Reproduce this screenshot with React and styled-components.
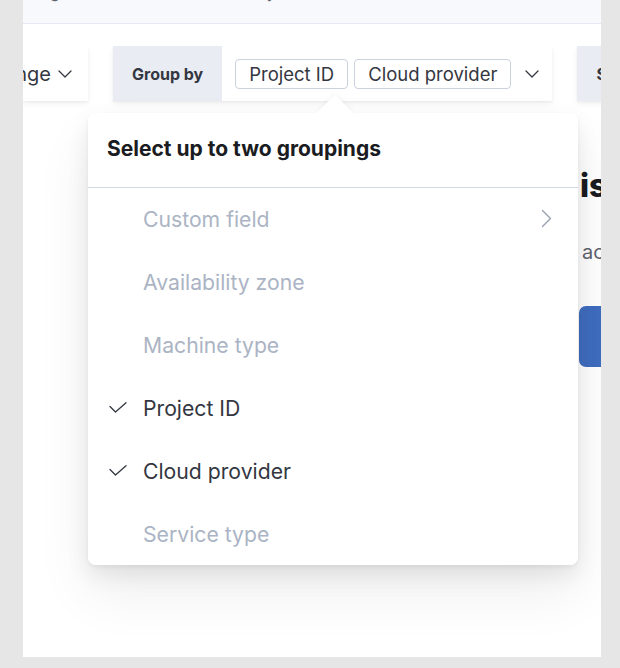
import React from "react"
import styled, { createGlobalStyle } from "styled-components"

const GlobalStyle = createGlobalStyle`
  html, body {
    margin: 0;
    padding: 0;
    background: #e6e6e6;
    font-family: Inter, "Noto Sans", "Liberation Sans", sans-serif;
    color: #343741;
  }
`

const Panel = styled.main`
  position: relative;
  margin-left: 23px;
  width: 578px;
  height: 657px;
  background: #fff;
  overflow: hidden;
`

const TopStrip = styled.div`
  height: 23px;
  background: #f8f9fc;
  border-bottom: 1px solid #e3e8f2;
  overflow: hidden;
  padding-left: 9px;
  p {
    margin: -18px 0 0;
    font-size: 16px;
    line-height: 20px;
    color: #5e646f;
    white-space: nowrap;
  }
`

const Toolbar = styled.div`
  display: flex;
  gap: 25px;
  margin-top: 22px;
  height: 55px;
`

const Card = styled.div`
  display: flex;
  align-items: stretch;
  flex-shrink: 0;
  background: #fff;
  box-shadow: 0 3px 6px rgba(0, 0, 0, 0.06), 0 1px 2px rgba(0, 0, 0, 0.04);
  width: ${(p) => (p.$width ? `${p.$width}px` : "auto")};
  overflow: hidden;
  justify-content: ${(p) => (p.$end ? "flex-end" : "flex-start")};
`

const Field = styled.div`
  display: flex;
  align-items: center;
  gap: 7px;
  padding-right: 16px;
  font-size: 20px;
  white-space: nowrap;
  flex-shrink: 0;
`

const Label = styled.div`
  display: flex;
  align-items: center;
  background: #e9edf3;
  padding: 0 19px;
  font-size: 16px;
  font-weight: 700;
  color: #343741;
  white-space: nowrap;
  flex-shrink: 0;
`

const Chips = styled.div`
  display: flex;
  align-items: center;
  gap: 6px;
  padding: 0 13px 0 13px;
`

const Chip = styled.span`
  display: inline-flex;
  align-items: center;
  height: 30px;
  box-sizing: border-box;
  padding: 0 13px;
  border: 1px solid #cbd2de;
  border-radius: 4px;
  font-size: 18.5px;
  color: #343741;
  white-space: nowrap;
`

const ChevronBtn = styled.span`
  display: inline-flex;
  margin-left: 8px;
`

const Hero = styled.section`
  padding: 65px 0 0 557px;
  white-space: nowrap;
  h1 {
    margin: 0;
    font-size: 32px;
    line-height: 40px;
    font-weight: 800;
    color: #1a1c21;
  }
  p {
    margin: 32px 0 0 2px;
    font-size: 20px;
    line-height: 28px;
    color: #5e646f;
  }
`

const PrimaryButton = styled.button`
  display: block;
  margin: 40px 0 0 -1px;
  width: 200px;
  height: 61px;
  border: 0;
  border-radius: 7px;
  background: #3f6dbf;
  color: #fff;
  font: inherit;
`

const Popover = styled.div`
  position: absolute;
  left: 65px;
  top: 113px;
  width: 490px;
  height: 452px;
  background: #fff;
  border-radius: 8px;
  box-shadow: 0 2px 4px rgba(0, 0, 0, 0.05), 0 10px 22px rgba(0, 0, 0, 0.08),
    0 28px 56px rgba(0, 0, 0, 0.07);
  z-index: 5;
`

const Arrow = styled.div`
  position: absolute;
  left: 234px;
  top: -13px;
  width: 26px;
  height: 26px;
  background: #fff;
  transform: rotate(45deg);
  box-shadow: -2px -2px 4px rgba(0, 0, 0, 0.03);
`

const PopoverBody = styled.div`
  position: relative;
  height: 100%;
  border-radius: 8px;
  overflow: hidden;
  background: #fff;
`

const PopoverTitle = styled.h2`
  margin: 0;
  box-sizing: border-box;
  height: 75px;
  padding: 22px 19px 0;
  font-size: 21px;
  line-height: 28px;
  font-weight: 700;
  color: #1a1c21;
  border-bottom: 1px solid #d3dae6;
`

const OptionList = styled.ul`
  list-style: none;
  margin: -1px 0 0;
  padding: 0;
`

const Option = styled.li`
  display: flex;
  align-items: center;
  height: 63px;
  padding: 0 26px 0 21px;
  font-size: 21.2px;
  color: ${(p) => (p.$selected ? "#343741" : "#abb4c4")};
`

const CheckSlot = styled.span`
  display: inline-flex;
  width: 18px;
  margin-right: 16px;
`

const OptionText = styled.span`
  flex: 1;
`

const ChevronDown = ({ color = "#343741" }) => (
  <svg width="14" height="8" viewBox="0 0 14 8" fill="none">
    <path d="M1 1l6 6 6-6" stroke={color} strokeWidth="1.3" strokeLinecap="round" strokeLinejoin="round" />
  </svg>
)

const ChevronRight = () => (
  <svg width="11" height="19" viewBox="0 0 11 19" fill="none">
    <path d="M1.5 1.5l8 8-8 8" stroke="#98a2b3" strokeWidth="1.4" strokeLinecap="round" strokeLinejoin="round" />
  </svg>
)

const Check = () => (
  <svg width="18" height="11" viewBox="0 0 18 11" fill="none">
    <path d="M1 4.5l5.5 5.5L17 0.8" stroke="#343741" strokeWidth="1.3" strokeLinecap="round" strokeLinejoin="round" />
  </svg>
)

const options = [
  { name: "Custom field", more: true },
  { name: "Availability zone" },
  { name: "Machine type" },
  { name: "Project ID", selected: true },
  { name: "Cloud provider", selected: true },
  { name: "Service type" },
]

const App = () => {
  return (
    <>
      <GlobalStyle />
      <Panel>
        <TopStrip>
          <p>Organize the whole result set by the chosen fields shown below.</p>
        </TopStrip>

        <Toolbar>
          <Card $width={65} $end>
            <Field>
              Date range <ChevronDown />
            </Field>
          </Card>
          <Card>
            <Label>Group by</Label>
            <Chips>
              <Chip>Project ID</Chip>
              <Chip>Cloud provider</Chip>
              <ChevronBtn>
                <ChevronDown />
              </ChevronBtn>
            </Chips>
          </Card>
          <Card>
            <Label>Sort by</Label>
          </Card>
        </Toolbar>

        <Hero>
          <h1>is overview</h1>
          <p>activate a grouping to begin</p>
          <PrimaryButton>Start</PrimaryButton>
        </Hero>

        <Popover>
          <Arrow />
          <PopoverBody>
            <PopoverTitle>Select up to two groupings</PopoverTitle>
            <OptionList>
              {options.map((o) => (
                <Option key={o.name} $selected={o.selected}>
                  <CheckSlot>{o.selected && <Check />}</CheckSlot>
                  <OptionText>{o.name}</OptionText>
                  {o.more && <ChevronRight />}
                </Option>
              ))}
            </OptionList>
          </PopoverBody>
        </Popover>
      </Panel>
    </>
  )
}

export default App
